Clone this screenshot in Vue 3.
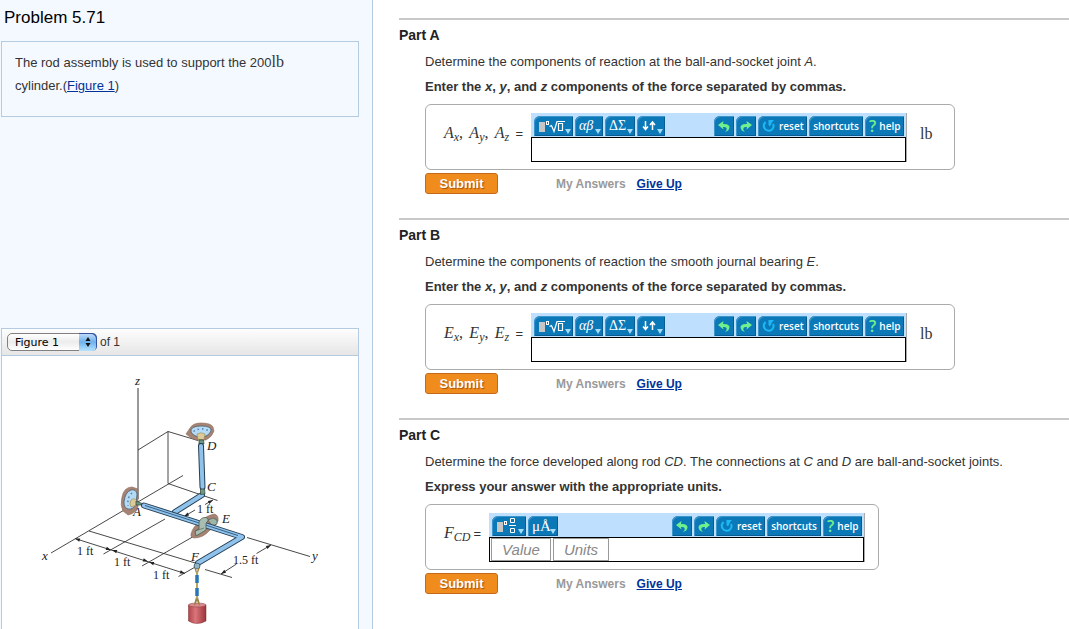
<template>
  <div class="page">
    <aside class="sidebar">
      <div class="intro">
        <h1 class="problem-title">Problem 5.71</h1>
        <div class="problem-box">
          The rod assembly is used to support the 200<span class="tex">lb</span><br />
          cylinder.(<a href="#figure" class="link">Figure 1</a>)
        </div>
      </div>

      <section id="figure" class="figure">
        <div class="figure-bar">
          <div class="select-wrap">
            <select v-model="figure" class="figure-select" aria-label="Figure">
              <option>Figure 1</option>
            </select>
            <svg class="stepper" viewBox="0 0 18 18" aria-hidden="true">
              <path d="M9 4l2.500 4h-5zM9 14l2.500-4h-5z" fill="#111" />
            </svg>
          </div>
          <span>of 1</span>
        </div>

        <svg class="drawing" viewBox="2 356 356 273" role="img" aria-label="Rod assembly">
          <defs>
            <linearGradient id="cylinder" x1="0" x2="1" y1="0" y2="0">
              <stop offset="0" stop-color="#b0454a" />
              <stop offset="0.4" stop-color="#d9757a" />
              <stop offset="1" stop-color="#9c333a" />
            </linearGradient>
          </defs>

          <!-- axes and reference planes -->
          <g class="thin">
            <path d="M138 388V499" class="grey" />
            <path d="M138 450L168 431.500L198 440.500M168 431.500V483.500L217.500 500.500" />
            <path d="M183 475.500L51 553" />
            <path d="M247 537.500L310 556.500" />
            <path d="M89 531L197 563.500M205 569.500L232 577.500" />
            <path d="M103.500 554L165 519M142 566L196 535M178.500 576.500L197 566" />
            <path d="M75 538.500L185 573.500" />
            <path d="M184 516.500L195 510M205 504.500L213 500" />
            <path d="M256.500 553.500L271 545M236.500 564L221 574" />
          </g>
          <g class="arrows">
            <path
              v-for="(a, i) in arrows"
              :key="i"
              d="M0 0L-5 -1.700L-5 1.700Z"
              :transform="`translate(${a[0]} ${a[1]}) rotate(${a[2]})`"
            />
          </g>

          <!-- wall support at D -->
          <path d="M186 434L190 428Q193 423 201 423Q211 423 213 427L214 431Q212 437 206 440L196 440Q190 438 186 434Z" fill="#a68372" stroke="#8c6a5a" stroke-width="0.600" />
          <path d="M191 432Q190 426 201 426Q212 426 211 431Q208 437 201 437Q194 437 191 432Z" fill="#b4daf5" stroke="#3e5664" stroke-width="0.700" />
          <path d="M193.500 431.500Q201 426.500 209 431" fill="none" stroke="#4b7fae" stroke-width="1.500" stroke-dasharray="1.500 3" />
          <path d="M197 434Q201 431.500 205 434L204 439.500H198Z" fill="#dccb96" stroke="#8a7c50" stroke-width="0.500" />
          <path d="M199 440H203.500L204 444H199Z" fill="#6c9884" stroke="#2c4038" stroke-width="0.700" />

          <!-- wall support at A -->
          <path d="M122 497Q124 487 132 487L138 489V507Q136 513 128 515L123 511Q120 505 122 497Z" fill="#a68372" stroke="#8c6a5a" stroke-width="0.600" />
          <path d="M124 502Q125 492 131 490Q136 489 137 494L136 504Q133 510 128 509Q124 508 124 502Z" fill="#b4daf5" stroke="#3e5664" stroke-width="0.700" />
          <path d="M132 493Q127 497 128 506" fill="none" stroke="#4b7fae" stroke-width="1.500" stroke-dasharray="1.500 3" />
          <path d="M131 500Q134 497 137 501V505L131 507Q129 503 131 500Z" fill="#dccb96" stroke="#8a7c50" stroke-width="0.500" />
          <path d="M136 501L142 503.500L141 505L136 505Z" fill="#6c9884" stroke="#2c4038" stroke-width="0.700" />

          <!-- bearing base at E, behind the rod -->
          <path d="M191 534Q193 526 200 522Q207 515 214 514Q219 515 218 521Q215 527 209 531Q203 538 194 538Q190 537 191 534Z" fill="#a68372" stroke="#8c6a5a" stroke-width="0.600" />
          <path d="M208 520L213 518L217 520V524L212 526Z" fill="#9fb5a7" stroke="#4b5d52" stroke-width="0.700" />

          <!-- rods -->
          <path d="M201 446L202.500 487" class="rod-edge" />
          <path d="M201 446L202.500 487" class="rod" />
          <path d="M202 495L175 512" class="rod-edge" />
          <path d="M202 495L175 512" class="rod" />
          <path d="M200.500 489H204.500L205 494L200.500 494.500Z" fill="#6c9884" stroke="#2c4038" stroke-width="0.700" />
          <path d="M144 505.500L242 537L198 563" class="rod-edge" />
          <path d="M144 505.500L242 537L198 563" class="rod" />
          <path d="M145 505.500L238 535.500" stroke="#2f5578" stroke-width="0.900" fill="none" />

          <!-- bearing cap -->
          <path d="M195 531L199 529V522Q201 517 206 517.500Q209 518 208 521L206 523V530L196 536Z" fill="#a9beb0" stroke="#4b5d52" stroke-width="0.800" />
          <path d="M195 531L204 528" stroke="#4b5d52" stroke-width="0.600" />

          <!-- chain and cylinder -->
          <circle cx="197" cy="566" r="3" fill="#8fb4c6" stroke="#36505e" stroke-width="0.800" />
          <path d="M195 568L197 574L199 568M195 603L197 596L199 603" fill="none" stroke="#9a8546" stroke-width="1.300" />
          <path d="M197 572V600" stroke="#b9a461" stroke-width="2" />
          <path d="M197 575V583M197 588V596" stroke="#2877b5" stroke-width="3.500" />
          <path d="M188.500 605V621Q197 626 206 621V605Z" fill="url(#cylinder)" stroke="#7d2a30" stroke-width="0.500" />
          <ellipse cx="197.250" cy="605" rx="8.750" ry="2" fill="#d98a8b" stroke="#8a3a3f" stroke-width="0.500" />
          <path d="M194.500 605L197 599L199.500 605" fill="none" stroke="#9a8546" stroke-width="1.300" />

          <g class="names">
            <text v-for="n in names" :key="n.t" :x="n.x" :y="n.y">{{ n.t }}</text>
          </g>
          <g class="sizes">
            <text v-for="(s, i) in sizes" :key="i" :x="s.x" :y="s.y">{{ s.t }}</text>
          </g>
        </svg>
      </section>
    </aside>

    <main class="parts">
      <section v-for="part in parts" :key="part.id" class="part">
        <h2 class="part-title">Part {{ part.id }}</h2>
        <div class="part-body">
          <p class="question">
            <component :is="r.i ? 'em' : 'span'" v-for="(r, i) in part.question" :key="i">{{ r.t }}</component>
          </p>
          <p class="question strong">
            <component :is="r.i ? 'em' : 'span'" v-for="(r, i) in part.hint" :key="i">{{ r.t }}</component>
          </p>

          <div class="answer" :class="{ 'answer-units': part.hasUnits }">
            <label class="answer-label" :for="`answer-${part.id}`">
              <span v-for="(v, i) in part.vars" :key="v.sub" class="tex variable"><i>{{ v.name }}</i><sub>{{ v.sub }}</sub><template v-if="i < part.vars.length - 1">,</template></span>
              <span class="equals">=</span>
            </label>

            <div class="editor">
              <div class="toolbar">
                <template v-if="part.hasUnits">
                  <button type="button" class="tool tool-fraction" aria-label="Templates">
                    <svg width="24" height="18" viewBox="0 0 24 18">
                      <rect x="1" y="5" width="6" height="10" fill="#c6c6c6" />
                      <rect x="8.500" y="4.500" width="2" height="3" fill="none" stroke="#fff" />
                      <path d="M14.500 1.500h4v4h-4zM14.500 11.500h4v4h-4zM13 8.500h7" fill="none" stroke="#fff" />
                    </svg>
                    <span class="caret"></span>
                  </button>
                  <button type="button" class="tool tool-mu">μÅ<span class="caret"></span></button>
                </template>
                <template v-else>
                  <button type="button" class="tool tool-root" aria-label="Templates">
                    <svg width="28" height="18" viewBox="0 0 28 18">
                      <rect x="1" y="5" width="6" height="10" fill="#c6c6c6" />
                      <rect x="8.500" y="4.500" width="2" height="3" fill="none" stroke="#fff" />
                      <path d="M11.500 9.500l2-1 2.500 6 3-10H27M20.500 6.500h4v7h-4z" fill="none" stroke="#fff" stroke-width="1.200" />
                    </svg>
                    <span class="caret"></span>
                  </button>
                  <button type="button" class="tool tool-greek"><i>αβ</i><span class="caret"></span></button>
                  <button type="button" class="tool tool-sigma">ΔΣ<span class="caret"></span></button>
                  <button type="button" class="tool tool-arrows" aria-label="Arrows">
                    <svg width="16" height="18" viewBox="0 0 16 18">
                      <path d="M4.500 4v8M2 9.500l2.500 3 2.500-3M11.500 13V5M9 8l2.500-3 2.500 3" fill="none" stroke="#fff" stroke-width="1.500" />
                    </svg>
                    <span class="caret"></span>
                  </button>
                </template>

                <span class="spacer"></span>

                <button type="button" class="tool tool-icon" aria-label="Undo">
                  <svg width="20" height="20" viewBox="0 0 20 20">
                    <path d="M4 9L9.500 5L9 8Q15.500 7.500 15.500 11.500Q15 15 11 16Q13.500 14 12.500 12Q11.500 10.500 9 11L9.500 13.500Z" fill="#6ff08c" />
                  </svg>
                </button>
                <button type="button" class="tool tool-icon" aria-label="Redo">
                  <svg width="20" height="20" viewBox="0 0 20 20">
                    <path d="M16 9L10.500 5L11 8Q4.500 7.500 4.500 11.500Q5 15 9 16Q6.500 14 7.500 12Q8.500 10.500 11 11L10.500 13.500Z" fill="#6ff08c" />
                  </svg>
                </button>
                <button type="button" class="tool tool-reset">
                  <svg width="14" height="16" viewBox="0 0 14 16">
                    <path d="M3.500 4Q0 8 3.500 11.500Q7 14 10 11.500Q12.500 9 11 6" fill="none" stroke="#1cb8f2" stroke-width="2" />
                    <path d="M6.500 2H12L10.500 3.500L8 8.500L6.500 7Z" fill="#1cb8f2" />
                  </svg>
                  reset
                </button>
                <button type="button" class="tool tool-shortcuts">shortcuts</button>
                <button type="button" class="tool tool-help"><span class="question-mark">?</span>help</button>
              </div>

              <div v-if="part.hasUnits" class="fields">
                <input :id="`answer-${part.id}`" v-model="part.value" class="field field-value" placeholder="Value" />
                <input v-model="part.units" class="field field-unit" placeholder="Units" aria-label="Units" />
              </div>
              <input v-else :id="`answer-${part.id}`" v-model="part.value" class="answer-input" />
            </div>

            <span v-if="!part.hasUnits" class="tex unit">lb</span>
          </div>

          <div class="actions">
            <button type="button" class="submit">Submit</button>
            <span class="my-answers">My Answers</span>
            <a href="#" class="link give-up">Give Up</a>
          </div>
        </div>
      </section>
    </main>
  </div>
</template>

<script setup>
import { ref, reactive } from 'vue'

const figure = ref('Figure 1')

const componentsHint = [
  { t: 'Enter the ' },
  { t: 'x', i: true },
  { t: ', ' },
  { t: 'y', i: true },
  { t: ', and ' },
  { t: 'z', i: true },
  { t: ' components of the force separated by commas.' }
]

const xyz = (name) => ['x', 'y', 'z'].map((sub) => ({ name, sub }))

const parts = reactive([
  {
    id: 'A',
    question: [
      { t: 'Determine the components of reaction at the ball-and-socket joint ' },
      { t: 'A', i: true },
      { t: '.' }
    ],
    hint: componentsHint,
    vars: xyz('A'),
    hasUnits: false,
    value: ''
  },
  {
    id: 'B',
    question: [
      { t: 'Determine the components of reaction the smooth journal bearing ' },
      { t: 'E', i: true },
      { t: '.' }
    ],
    hint: componentsHint,
    vars: xyz('E'),
    hasUnits: false,
    value: ''
  },
  {
    id: 'C',
    question: [
      { t: 'Determine the force developed along rod ' },
      { t: 'CD', i: true },
      { t: '. The connections at ' },
      { t: 'C', i: true },
      { t: ' and ' },
      { t: 'D', i: true },
      { t: ' are ball-and-socket joints.' }
    ],
    hint: [{ t: 'Express your answer with the appropriate units.' }],
    vars: [{ name: 'F', sub: 'CD' }],
    hasUnits: true,
    value: '',
    units: ''
  }
])

// arrow heads: x, y, rotation
const arrows = [
  [75, 538.5, 198],
  [111, 550, 18],
  [112, 550, 198],
  [148, 561.5, 18],
  [149, 562, 198],
  [185, 573.5, 18],
  [184, 516.5, 150],
  [213, 500, -30],
  [271, 545, -30],
  [221, 574, 147]
]

const names = [
  { t: 'z', x: 135, y: 385 },
  { t: 'D', x: 207, y: 450 },
  { t: 'C', x: 207, y: 491 },
  { t: 'A', x: 133, y: 516 },
  { t: 'E', x: 222, y: 523 },
  { t: 'F', x: 191, y: 561 },
  { t: 'x', x: 42, y: 560 },
  { t: 'y', x: 312, y: 560 }
]

const sizes = [
  { t: '1 ft', x: 77, y: 555 },
  { t: '1 ft', x: 114, y: 566 },
  { t: '1 ft', x: 153, y: 579 },
  { t: '1 ft', x: 197, y: 513 },
  { t: '1.5 ft', x: 233, y: 564 }
]
</script>

<style>
body {
  background: #fff;
}
</style>

<style scoped>
.page {
  display: grid;
  grid-template-columns: 373px minmax(0, 1fr);
  min-height: 100vh;
  font-family: "Liberation Sans", Arial, sans-serif;
  font-size: 13px;
  color: #333;
}

.sidebar {
  display: flex;
  flex-direction: column;
  padding: 0 13px 0 1px;
  background: #f4f9ff;
  border-right: 1px solid #b5cce0;
}

.intro {
  flex: 1;
}

.problem-title {
  margin: 8px 3px 13px;
  font-size: 17px;
  font-weight: 400;
  line-height: 20px;
  color: #000;
}

.problem-box {
  padding: 9px 13px 19px;
  border: 1px solid #b5cce0;
  line-height: 23px;
}

.tex {
  font-family: "Liberation Serif", serif;
  font-size: 16px;
  line-height: 16px;
}

.link {
  color: #039;
  text-decoration: underline;
}

.figure {
  border: 1px solid #b5cce0;
  border-bottom: 0;
  background: #fff;
}

.figure-bar {
  display: flex;
  align-items: center;
  gap: 3px;
  height: 26px;
  padding-left: 5px;
  border-bottom: 1px solid #b5cce0;
  background: linear-gradient(#fdfdfd, #e6e6e6);
  font-size: 12px;
}

.select-wrap {
  position: relative;
  display: flex;
}

.figure-select {
  appearance: none;
  width: 90px;
  height: 18px;
  padding: 0 20px 0 7px;
  border: 1px solid #808080;
  border-radius: 5px;
  background: linear-gradient(#fff, #ececec 50%, #fff);
  font: 11px "DejaVu Sans", sans-serif;
  color: #000;
}

.stepper {
  position: absolute;
  top: 0;
  right: 0;
  width: 18px;
  height: 18px;
  border-radius: 0 5px 5px 0;
  background: linear-gradient(#c6e0f8, #6fb1ee 50%, #b5e2fd);
  box-shadow: inset -1px 1px 0 #34529e;
  pointer-events: none;
}

.drawing {
  display: block;
  width: 100%;
}

.thin {
  fill: none;
  stroke: #333;
  stroke-width: 0.9;
}

.thin .grey {
  stroke: #777;
  stroke-width: 1.5;
}

.arrows {
  fill: #222;
}

.rod,
.rod-edge {
  fill: none;
  stroke-linejoin: round;
  stroke-linecap: round;
}

.rod-edge {
  stroke: #263e54;
  stroke-width: 6;
}

.rod {
  stroke: #8fc3ec;
  stroke-width: 4;
}

.names,
.sizes {
  font-family: "Liberation Serif", serif;
  font-size: 12px;
  fill: #222;
}

.names {
  font-size: 13px;
  font-style: italic;
}

.parts {
  padding: 18px 0 0 26px;
}

.part {
  padding: 6px 0 24px;
  border-top: 2px solid #c8c8c8;
}

.part-title {
  margin: 0 0 5px;
  font-size: 14px;
  line-height: 18px;
  color: #222;
}

.part-body {
  padding-left: 26px;
}

.question {
  margin: 0;
  line-height: 25px;
}

.strong {
  font-weight: 700;
}

.answer {
  display: flex;
  box-sizing: border-box;
  max-width: 530px;
  margin-top: 5px;
  padding: 8px 0 7px 18px;
  border: 1px solid #aaa;
  border-radius: 6px;
}

.answer-units {
  max-width: 454px;
  padding-right: 13px;
}

.answer-label {
  display: flex;
  flex: 1;
  align-items: center;
  justify-content: space-between;
  padding: 0 8px 8px 0;
  white-space: nowrap;
}

.variable sub {
  font-size: 12px;
  font-style: italic;
  line-height: 12px;
  vertical-align: -3px;
}

.equals {
  font-size: 13px;
}

.editor {
  box-sizing: border-box;
  width: 376px;
  border-right: 1px solid #aaa;
}

.toolbar {
  display: flex;
  gap: 2px;
  padding: 3px 2px 1px 3px;
  background: #bfdfff;
}

.tool {
  display: flex;
  position: relative;
  align-items: center;
  box-sizing: border-box;
  height: 20px;
  padding: 0;
  border: 0;
  border-radius: 6px 0 0 0;
  background: #0b78b8;
  box-shadow: inset 1px 1px 0 #3c96cc, inset -1px -1px 0 #075c93;
  font: 600 10px "Open Sans", "Noto Sans", sans-serif;
  color: #fff;
}

.tool-root {
  width: 39px;
  padding-left: 4px;
}

.tool-fraction {
  width: 34px;
  padding-left: 4px;
}

.tool-greek,
.tool-sigma,
.tool-mu {
  padding-left: 4px;
  font: 14px "Liberation Serif", serif;
}

.tool-greek,
.tool-arrows {
  width: 28px;
}

.tool-sigma,
.tool-mu {
  width: 30px;
}

.tool-mu {
  font-size: 15px;
}

.tool-arrows {
  padding-left: 4px;
}

.tool-icon {
  width: 20px;
}

.tool-reset {
  gap: 3px;
  width: 49px;
  padding-left: 4px;
}

.tool-shortcuts {
  justify-content: center;
  width: 54px;
}

.tool-help {
  gap: 3px;
  width: 39px;
  padding-left: 4px;
}

.question-mark {
  font-size: 16px;
  color: #6ff08c;
}

.caret {
  position: absolute;
  right: 2px;
  bottom: 2px;
  border: 3px solid transparent;
  border-top: 5px solid #a5dcf8;
  border-bottom: 0;
}

.spacer {
  flex: 1;
}

.answer-input,
.fields {
  box-sizing: border-box;
  width: 100%;
  height: 25px;
  border: 1px solid #000;
  border-radius: 0;
  background: #fff;
}

.answer-input {
  display: block;
  padding: 0 6px;
  font: 15px "Liberation Sans", Arial, sans-serif;
}

.fields {
  display: flex;
  gap: 2px;
  padding: 0 1px;
}

.field {
  box-sizing: border-box;
  height: 23px;
  padding: 0;
  border: 1px solid #999;
  border-radius: 0;
  font: 15px "Liberation Sans", Arial, sans-serif;
  text-align: center;
}

.field::placeholder {
  font-style: italic;
  color: #888;
  opacity: 1;
}

.field-value {
  width: 60px;
}

.field-unit {
  width: 56px;
}

.unit {
  width: 34px;
  padding: 13px 0 0 13px;
}

.actions {
  display: flex;
  align-items: center;
  margin-top: 3px;
  font-size: 12px;
  font-weight: 700;
}

.submit {
  width: 73px;
  height: 21px;
  margin-right: 58px;
  padding: 0;
  border: 1px solid #c4691c;
  border-radius: 3px;
  background: #f08c1e;
  font: 700 13px "Liberation Sans", Arial, sans-serif;
  color: #fff;
  text-shadow: 1px 1px 1px #a0500a;
}

.my-answers {
  margin-right: 11px;
  color: #999;
}
</style>
